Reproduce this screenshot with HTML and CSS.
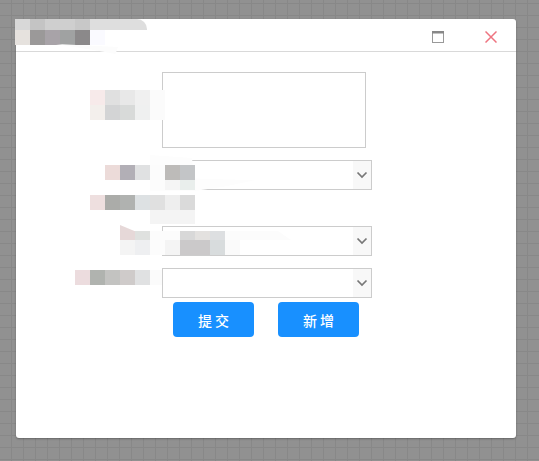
FILE: index.html
```html
<!DOCTYPE html>
<html>
<head>
    <meta charset="utf-8">
    <meta name="viewport" content="width=device-width, initial-scale=1.0">
    <link rel="stylesheet" href="styles.css">
</head>
<body>
    <div class="dialog">
        <div class="dialog-header">
            <svg class="icon-max" width="12" height="12" viewBox="0 0 12 12">
                <rect x="0.5" y="0.5" width="11" height="11" fill="none" stroke="#999" stroke-width="1"/>
                <rect x="0" y="0" width="12" height="2.5" fill="#888"/>
            </svg>
            <svg class="icon-close" width="12" height="12" viewBox="0 0 12 12">
                <path d="M0.5 0.5 L11.5 11.5 M11.5 0.5 L0.5 11.5" fill="none" stroke="#ee7480" stroke-width="1.5"/>
            </svg>
        </div>

        <form class="dialog-form">
            <textarea class="field-area"></textarea>
            <div class="field-select first"><span class="arrow"><svg width="12" height="8" viewBox="0 0 12 8"><path d="M1.5 1.5 L6 6 L10.5 1.5" fill="none" stroke="#777" stroke-width="1.7"/></svg></span></div>
            <div class="field-select second"><span class="arrow"><svg width="12" height="8" viewBox="0 0 12 8"><path d="M1.5 1.5 L6 6 L10.5 1.5" fill="none" stroke="#777" stroke-width="1.7"/></svg></span></div>
            <div class="field-select third"><span class="arrow"><svg width="12" height="8" viewBox="0 0 12 8"><path d="M1.5 1.5 L6 6 L10.5 1.5" fill="none" stroke="#777" stroke-width="1.7"/></svg></span></div>
            <div class="form-buttons">
                <button type="button" class="botao">提 交</button>
                <button type="button" class="botao">新 增</button>
            </div>
        </form>

        <!-- pixelated patches that lie over the title and the labels -->
        <div class="patch title-a"></div>
        <div class="patch title-b"></div>
        <div class="patch smear-a"></div>
        <div class="patch label-1a"></div>
        <div class="patch label-1b"></div>
        <div class="patch smear-b"></div>
        <div class="patch label-2a"></div>
        <div class="patch label-2b"></div>
        <div class="patch label-3a"></div>
        <div class="patch label-3b"></div>
        <div class="patch smear-c"></div>
        <div class="patch label-4a"></div>
        <div class="patch label-4b"></div>
        <div class="patch label-5a"></div>
    </div>
</body>
</html>
```

FILE: styles.css
```css
html, body {
    height: 100%;
}

body {
    margin: 0;
    padding: 19px 0 0 16px;
    box-sizing: border-box;
    overflow: hidden;
    font-family: "Noto Sans CJK SC", "Noto Sans", sans-serif;
    background-color: #919191;
    background-image:
        linear-gradient(#888888 1px, transparent 1px),
        linear-gradient(90deg, #888888 1px, transparent 1px);
    background-size: 12px 12px;
    background-position: 11px 3px;
}

.dialog {
    position: relative;
    width: 500px;
    height: 419px;
    background-color: white;
    border-radius: 3px;
    box-shadow: 0 1px 2px rgba(0, 0, 0, 0.3);
}

.dialog-header {
    height: 32px;
    border-bottom: 1px solid #d9d9d9;
    display: flex;
    justify-content: flex-end;
    align-items: center;
    gap: 41px;
    padding: 0 19px 0 0;
}

.icon-max {
    margin-top: 4px;
}

.icon-close {
    margin-top: 4px;
}

.dialog-form {
    display: flex;
    flex-direction: column;
    padding: 20px 0 0 146px;
}

.field-area {
    display: block;
    width: 204px;
    height: 76px;
    margin: 0;
    padding: 0;
    border: 1px solid #ccc;
    box-sizing: border-box;
    resize: none;
}

.field-select {
    width: 210px;
    height: 30px;
    border: 1px solid #ccc;
    box-sizing: border-box;
    display: flex;
    justify-content: flex-end;
}

.first {
    margin-top: 12px;
}

.second {
    margin-top: 36px;
}

.third {
    margin-top: 12px;
}

.arrow {
    width: 18px;
    background-color: #f8f8f8;
    display: flex;
    align-items: center;
    justify-content: center;
}

.form-buttons {
    display: flex;
    gap: 24px;
    margin: 4px 0 0 11px;
}

.botao {
    width: 81px;
    height: 35px;
    padding: 0;
    border: none;
    border-radius: 4px;
    background-color: #1890ff;
    color: white;
    font-family: inherit;
    font-size: 14px;
    font-weight: 500;
}

.patch {
    position: absolute;
}

/* left/top are the reference position minus the dialog origin (16, 19) */
.title-a {
    left: -1px;
    top: 0;
    width: 132px;
    height: 11px;
    border-top-right-radius: 10px;
    background: linear-gradient(90deg, #d8d8d8 0 15px, #c4c4c4 15px 30px, #cfcfcf 30px 60px, #c8c8c8 60px 75px, #dedede 75px);
}

.title-b {
    left: -1px;
    top: 11px;
    width: 90px;
    height: 15px;
    background: linear-gradient(90deg, #e6e2de 0 15px, #9b9999 15px 30px, #a8a3a8 30px 45px, #a0a2a2 45px 60px, #8b898a 60px 75px, #fafaff 75px);
}

.smear-a {
    left: 40px;
    top: 25px;
    width: 62px;
    height: 10px;
    background: #fcfcfc;
    clip-path: polygon(0 0, 100% 30%, 96% 100%, 70% 70%);
}

.label-1a {
    left: 74px;
    top: 71px;
    width: 75px;
    height: 15px;
    background: linear-gradient(90deg, #f7eaea 0 15px, #e0e0e0 15px 30px, #e8e8e8 30px 45px, #f0f0f0 45px 60px, #fbfbfb 60px);
}

.label-1b {
    left: 74px;
    top: 86px;
    width: 75px;
    height: 15px;
    background: linear-gradient(90deg, #f3efec 0 15px, #d3d4d5 15px 30px, #d8dad9 30px 45px, #eff0f0 45px 60px, #fbfbfb 60px);
}

.smear-b {
    left: 134px;
    top: 136px;
    width: 105px;
    height: 36px;
    background: #fdfdfd;
    clip-path: polygon(0 0, 40% 8%, 42% 65%, 100% 70%, 70% 88%, 42% 100%, 0 100%);
}

.label-2a {
    left: 89px;
    top: 146px;
    width: 90px;
    height: 15px;
    background: linear-gradient(90deg, #ecdbd9 0 15px, #b2afb6 15px 30px, #e0e1e2 30px 45px, #fcfcfc 45px 60px, #bdbbb9 60px 75px, #c3c5c7 75px);
}

.label-2b {
    left: 134px;
    top: 161px;
    width: 45px;
    height: 10px;
    background: linear-gradient(90deg, #fcfcfc 0 15px, #f5f5f5 15px 30px, #e9eeec 30px);
}

.label-3a {
    left: 74px;
    top: 176px;
    width: 105px;
    height: 15px;
    background: linear-gradient(90deg, #eedfdf 0 15px, #abaca9 15px 30px, #b0b2b0 30px 45px, #dde1e3 45px 60px, #e0e0e0 60px 75px, #eeeeee 75px 90px, #dadada 90px);
}

.label-3b {
    left: 134px;
    top: 191px;
    width: 45px;
    height: 14px;
    background: #f4f4f4;
}

.smear-c {
    left: 210px;
    top: 212px;
    width: 65px;
    height: 9px;
    background: #fcfcfc;
    clip-path: polygon(0 0, 80% 0, 100% 100%, 0 100%);
}

.label-4a {
    left: 104px;
    top: 206px;
    width: 120px;
    height: 15px;
    background: linear-gradient(90deg, #e6d8d8 0 15px, #dfe1df 15px 30px, #fcfcfc 30px 60px, #d8d8d8 60px 75px, #e3e1df 75px 90px, #dddfe1 90px 105px, #fcfcfc 105px);
    clip-path: polygon(0 0, 12% 40%, 100% 40%, 100% 100%, 0 100%);
}

.label-4b {
    left: 104px;
    top: 221px;
    width: 120px;
    height: 15px;
    background: linear-gradient(90deg, #f4f4f4 0 15px, #eeeff1 15px 30px, #fcfcfc 30px 45px, #f4f4f4 45px 60px, #cbc9ca 60px 90px, #d8dcdd 90px 105px, #fafafa 105px);
}

.label-5a {
    left: 59px;
    top: 251px;
    width: 87px;
    height: 15px;
    background: linear-gradient(90deg, #ecdcde 0 15px, #b0b3af 15px 30px, #c3c3c1 30px 45px, #cfcbca 45px 60px, #e0e1e2 60px 75px, #fbfbfb 75px);
}
```
